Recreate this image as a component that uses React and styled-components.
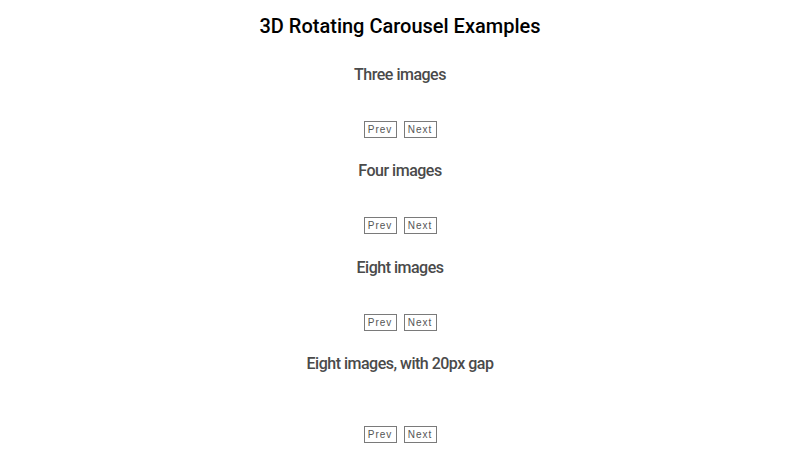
import React from "react";
import styled, { createGlobalStyle } from "styled-components";

const Global = createGlobalStyle`
  html, body { margin: 0; padding: 0; background: #fff; }
  body { font-family: Roboto, "Liberation Sans", sans-serif; }
`;

const Page = styled.main`
  display: flex;
  flex-direction: column;
  align-items: center;
  padding-top: 13px;
`;

const Title = styled.h1`
  margin: 0 0 26px;
  font-size: 20px;
  line-height: 26px;
  font-weight: 500;
  color: #000;
`;

const Section = styled.section`
  display: flex;
  flex-direction: column;
  align-items: center;
  margin-bottom: 23.4px;
`;

const Heading = styled.h2`
  margin: 0;
  font-size: 16px;
  line-height: 20px;
  font-weight: 500;
  letter-spacing: -0.5px;
  color: #4a4a4a;
`;

const Stage = styled.div`
  width: 100%;
  height: ${(p) => p.$h}px;
`;

const Controls = styled.div`
  display: flex;
  gap: 7px;
`;

const Button = styled.button`
  box-sizing: border-box;
  width: ${(p) => p.$w}px;
  height: 17px;
  padding: 0;
  background: #fff;
  border: 1px solid #7a7a7a;
  border-radius: 0;
  font-family: "Liberation Sans", Arial, sans-serif;
  font-size: 10px;
  letter-spacing: 1px;
  color: #555;
  cursor: pointer;
`;

const sections = [
  { title: "Three images", h: 36 },
  { title: "Four images", h: 36 },
  { title: "Eight images", h: 36 },
  { title: "Eight images, with 20px gap", h: 52 },
];

export default function App() {
  return (
    <>
      <Global />
      <Page>
        <Title>3D Rotating Carousel Examples</Title>
        {sections.map((s) => (
          <Section key={s.title}>
            <Heading>{s.title}</Heading>
            <Stage $h={s.h} />
            <Controls>
              <Button $w={33}>Prev</Button>
              <Button $w={33}>Next</Button>
            </Controls>
          </Section>
        ))}
      </Page>
    </>
  );
}
